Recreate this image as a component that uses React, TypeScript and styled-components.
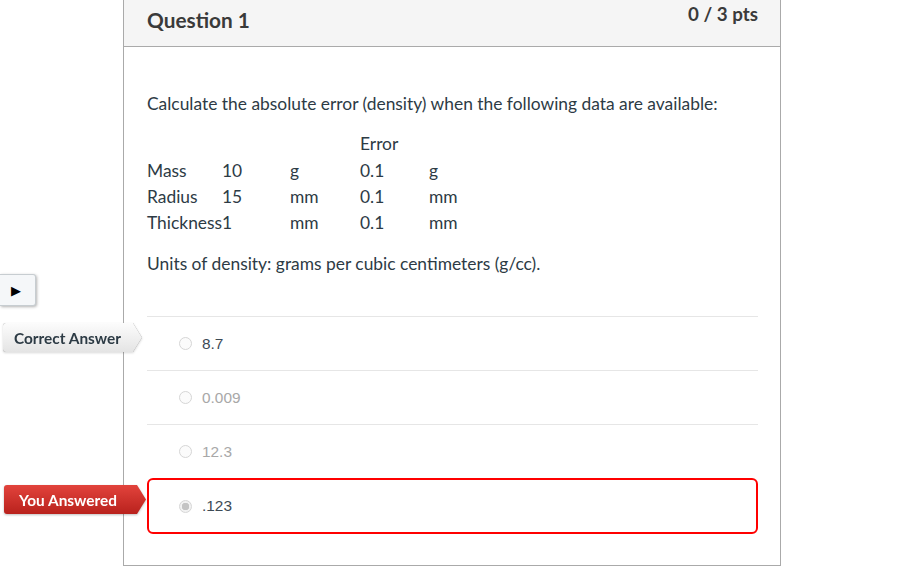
import React from 'react';
import styled, { createGlobalStyle } from 'styled-components';

const GlobalStyle = createGlobalStyle`
  html, body {
    margin: 0;
    padding: 0;
    background: #ffffff;
    font-family: Lato, "Open Sans", sans-serif;
    color: #2d3b45;
  }
`;

type Answer = {
  text: string;
  correct?: boolean;
  selected?: boolean;
};

const answers: Answer[] = [
  { text: '8.7', correct: true },
  { text: '0.009' },
  { text: '12.3' },
  { text: '.123', selected: true },
];

const rows = [
  ['', '', '', 'Error', ''],
  ['Mass', '10', 'g', '0.1', 'g'],
  ['Radius', '15', 'mm', '0.1', 'mm'],
  ['Thickness', '1', 'mm', '0.1', 'mm'],
];

const App = () => {
  return (
    <Page>
      <GlobalStyle />
      <Gutter>
        <ToggleButton>▶</ToggleButton>
      </Gutter>

      <QuestionCard>
        <Header>
          <Title>Question 1</Title>
          <Points>0 / 3 pts</Points>
        </Header>

        <Body>
          <Paragraph>
            Calculate the absolute error (density) when the following data are available:
          </Paragraph>

          <DataTable>
            {rows.map((row, i) => (
              <DataRow key={i}>
                {row.map((cell, j) => (
                  <Cell key={j}>{cell}</Cell>
                ))}
              </DataRow>
            ))}
          </DataTable>

          <Paragraph>Units of density: grams per cubic centimeters (g/cc).</Paragraph>

          <AnswerList>
            {answers.map((a) => (
              <AnswerRow key={a.text} $selected={a.selected}>
                {a.correct && (
                  <LabelWrap $variant="correct">
                    <Label $variant="correct">Correct Answer</Label>
                  </LabelWrap>
                )}
                {a.selected && (
                  <LabelWrap $variant="wrong">
                    <Label $variant="wrong">You Answered</Label>
                  </LabelWrap>
                )}
                <Radio $checked={a.selected} />
                <AnswerText $muted={!a.correct && !a.selected}>{a.text}</AnswerText>
              </AnswerRow>
            ))}
          </AnswerList>
        </Body>
      </QuestionCard>
    </Page>
  );
};

const Page = styled.div`
  display: flex;
  align-items: flex-start;
  width: 905px;
`;

const Gutter = styled.div`
  width: 123px;
  flex-shrink: 0;
  padding-top: 274px;
`;

const ToggleButton = styled.div`
  width: 36px;
  height: 32px;
  box-sizing: border-box;
  display: flex;
  align-items: center;
  justify-content: center;
  padding-right: 4px;
  background: #f5f7f9;
  border: 1px solid #c7cdd1;
  border-left: none;
  border-radius: 0 3px 3px 0;
  box-shadow: 1px 1px 3px rgba(0, 0, 0, 0.3);
  font-size: 13px;
  color: #000;
`;

const QuestionCard = styled.div`
  width: 658px;
  box-sizing: border-box;
  margin-top: -1px;
  border: 1px solid #aaaaaa;
  height: 567px;
`;

const Header = styled.div`
  display: flex;
  justify-content: space-between;
  align-items: flex-start;
  height: 47px;
  box-sizing: border-box;
  padding: 0 22px 0 23px;
  background: #f5f5f5;
  border-bottom: 1px solid #aaaaaa;
`;

const Title = styled.h2`
  margin: 8px 0 0;
  font-size: 20.8px;
  font-weight: 700;
  color: #3a3a3a;
  line-height: 24px;
`;

const Points = styled.div`
  margin-top: 3px;
  font-size: 18.8px;
  font-weight: 700;
  color: #3a3a3a;
  line-height: 22px;
`;

const Body = styled.div`
  padding: 45px 22px 0 23px;
`;

const Paragraph = styled.p`
  margin: 0;
  font-size: 17.4px;
  line-height: 24px;
  color: #2d3b45;
`;

const DataTable = styled.div`
  display: flex;
  flex-direction: column;
  margin: 14px 0 17px;
`;

const DataRow = styled.div`
  display: grid;
  grid-template-columns: 75px 68px 70px 69px 40px;
  height: 26px;
  align-items: center;

  &:first-child {
    height: 27px;
  }
`;

const Cell = styled.span`
  font-size: 17.4px;
  color: #2d3b45;
  white-space: nowrap;
`;

const AnswerList = styled.div`
  margin-top: 40px;
  border-top: 1px solid #e6e6e6;
`;

const AnswerRow = styled.div<{ $selected?: boolean }>`
  position: relative;
  display: flex;
  align-items: center;
  height: ${(p) => (p.$selected ? '56px' : '54px')};
  margin-top: ${(p) => (p.$selected ? '-1px' : '0')};
  box-sizing: border-box;
  padding-left: ${(p) => (p.$selected ? '30px' : '32px')};
  border-bottom: 1px solid #e6e6e6;
  border: ${(p) => (p.$selected ? '2px solid #ff0000' : undefined)};
  border-radius: ${(p) => (p.$selected ? '6px' : '0')};

  &:nth-last-child(2) {
    border-bottom-color: transparent;
  }
`;

const LabelWrap = styled.div<{ $variant: 'correct' | 'wrong' }>`
  position: absolute;
  top: ${(p) => (p.$variant === 'wrong' ? '5px' : '6px')};
  left: ${(p) => (p.$variant === 'wrong' ? '-145px' : '-144px')};
  filter: ${(p) =>
    p.$variant === 'wrong'
      ? 'drop-shadow(0 1px 1px rgba(0,0,0,0.25))'
      : 'drop-shadow(0 0 0.6px #8a8a8a) drop-shadow(0 1px 1px rgba(0,0,0,0.15))'};
`;

const Label = styled.div<{ $variant: 'correct' | 'wrong' }>`
  height: 29px;
  box-sizing: border-box;
  display: flex;
  align-items: center;
  font-size: 15.4px;
  font-weight: 700;
  white-space: nowrap;
  color: ${(p) => (p.$variant === 'wrong' ? '#ffffff' : '#2d3b45')};
  background: ${(p) =>
    p.$variant === 'wrong'
      ? 'linear-gradient(#e2433c, #b9221d)'
      : 'linear-gradient(#fcfcfc, #e4e4e4)'};
  clip-path: polygon(0 0, calc(100% - 9px) 0, 100% 50%, calc(100% - 9px) 100%, 0 100%);
  border-radius: 3px 0 0 3px;
  width: ${(p) => (p.$variant === 'wrong' ? '142px' : '139px')};
  padding-left: ${(p) => (p.$variant === 'wrong' ? '15px' : '11px')};
`;

const Radio = styled.span<{ $checked?: boolean }>`
  width: 13px;
  height: 13px;
  box-sizing: border-box;
  border-radius: 50%;
  border: 1px solid #d6d6d6;
  background: ${(p) =>
    p.$checked ? 'radial-gradient(circle, #c4c4c4 0 3.5px, #f2f2f2 4px)' : '#fbfbfb'};
  margin-right: 10px;
  flex-shrink: 0;
`;

const AnswerText = styled.span<{ $muted?: boolean }>`
  font-family: "Liberation Sans", Arial, sans-serif;
  font-size: 15.4px;
  color: ${(p) => (p.$muted ? '#a8a8a8' : '#3d4a55')};
`;

export default App;
